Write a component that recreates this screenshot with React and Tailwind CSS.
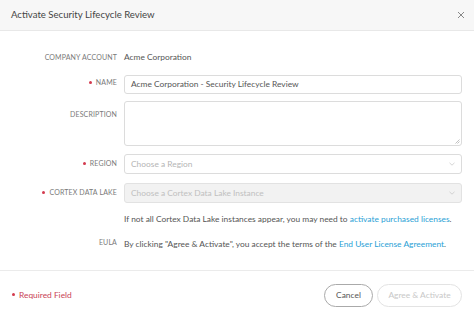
import React from 'react';

function Field({ label, required, children, top }) {
  return (
    <div className={`flex ${top ? 'items-start' : 'items-center'}`}>
      <div className={`w-[124px] shrink-0 flex items-center justify-end pr-[7px] text-[7px] uppercase tracking-[0.02em] text-[#7a7a7a] ${top ? 'pt-[8px]' : ''}`}>
        {required && <span className="mr-[4px] inline-block h-[3px] w-[3px] rounded-full bg-[#d33a4e]" />}
        {label}
      </div>
      <div className="flex-1 pr-[12px]">{children}</div>
    </div>
  );
}

function Chevron() {
  return (
    <svg width="6" height="4" viewBox="0 0 6 4" className="text-[#c4c4c4]">
      <path d="M0.5 0.8 L3 3.2 L5.5 0.8" fill="none" stroke="currentColor" strokeWidth="0.7" />
    </svg>
  );
}

export default function App() {
  return (
    <div className="w-[474px] h-[319px] bg-white font-['Lato','Open_Sans',sans-serif] text-[#333] flex flex-col">
      <div className="h-[31px] shrink-0 bg-[#f7f7f7] border-b border-[#e8e8e8] flex items-center justify-between pl-[11px] pr-[9px]">
        <span className="text-[9.6px] text-[#444]">Activate Security Lifecycle Review</span>
        <svg width="8" height="8" viewBox="0 0 8 8" className="text-[#888]">
          <path d="M1 1 L7 7 M7 1 L1 7" stroke="currentColor" strokeWidth="1" />
        </svg>
      </div>

      <div className="flex-1 flex flex-col pt-[19px] gap-[7px]">
        <Field label="Company Account">
          <div className="text-[8.4px] text-[#555] leading-[14px]">Acme Corporation</div>
        </Field>
        <Field label="Name" required>
          <div className="h-[19px] mt-[4px] rounded-[3px] border border-[#dcdcdc] flex items-center px-[6px] text-[8.4px] text-[#555]">
            Acme Corporation - Security Lifecycle Review
          </div>
        </Field>
        <Field label="Description" top>
          <div className="relative h-[45px] rounded-[3px] border border-[#dcdcdc]">
            <svg width="5" height="5" viewBox="0 0 5 5" className="absolute right-[1px] bottom-[1px] text-[#999]">
              <path d="M0.5 4.5 L4.5 0.5 M2.5 4.5 L4.5 2.5" stroke="currentColor" strokeWidth="0.6" />
            </svg>
          </div>
        </Field>
        <Field label="Region" required>
          <div className="h-[20px] mt-[1px] rounded-[3px] border border-[#dcdcdc] flex items-center justify-between px-[6px] text-[8.4px] text-[#b5b5b5]">
            <span>Choose a Region</span>
            <Chevron />
          </div>
        </Field>
        <Field label="Cortex Data Lake" required>
          <div className="h-[20px] mt-[2px] rounded-[3px] border border-[#e2e2e2] bg-[#f2f2f2] flex items-center justify-between px-[6px] text-[8.4px] text-[#c0c0c0]">
            <span>Choose a Cortex Data Lake Instance</span>
            <Chevron />
          </div>
        </Field>
        <Field label="">
          <div className="mt-[2px] text-[8.4px] text-[#555] leading-[14px] whitespace-nowrap">
            If not all Cortex Data Lake instances appear, you may need to{' '}
            <span className="text-[#2a9fd6]">activate purchased licenses</span>.
          </div>
        </Field>
        <Field label="Eula">
          <div className="mt-[4px] text-[8.4px] text-[#555] leading-[14px] whitespace-nowrap">
            By clicking "Agree &amp; Activate", you accept the terms of the{' '}
            <span className="text-[#2a9fd6]">End User License Agreement</span>.
          </div>
        </Field>
      </div>

      <div className="h-[49px] shrink-0 border-t border-[#ebebeb] flex items-center justify-between pl-[12px] pr-[12px]">
        <div className="flex items-center text-[8.4px] text-[#c94456]">
          <span className="mr-[4px] inline-block h-[3px] w-[3px] rounded-full bg-[#d33a4e]" />
          Required Field
        </div>
        <div className="flex items-center gap-[4px]">
          <button className="h-[23px] w-[49px] rounded-full border border-[#aaa] text-[8.4px] text-[#555]">Cancel</button>
          <button className="h-[23px] w-[85px] rounded-full border border-[#e3e3e3] text-[8.4px] text-[#c8c8c8]">Agree &amp; Activate</button>
        </div>
      </div>
    </div>
  );
}
